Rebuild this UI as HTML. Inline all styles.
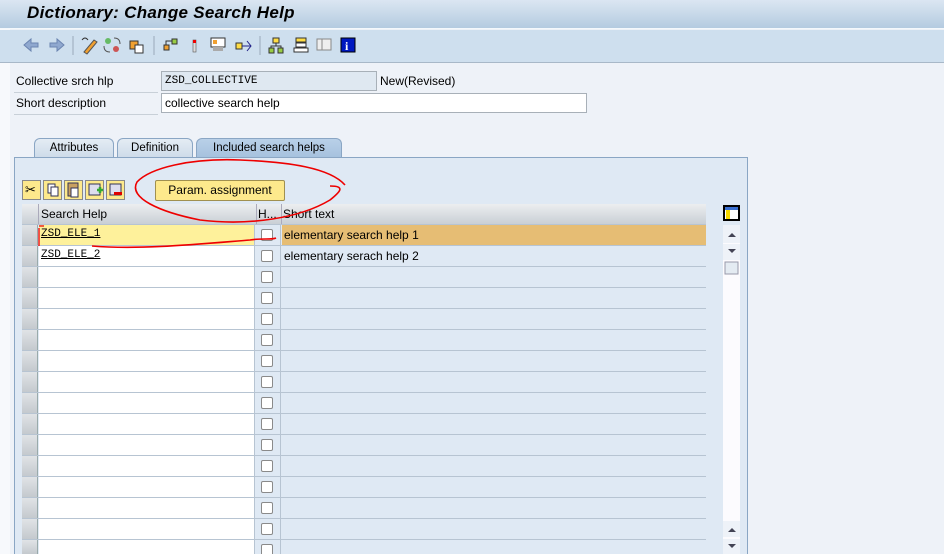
<!DOCTYPE html>
<html style="overflow:hidden;height:554px"><head><meta charset="utf-8"><style>
*{margin:0;padding:0;box-sizing:border-box}
html,body{width:944px;height:554px;overflow:hidden}
body{background:#eef2f8;font-family:"Liberation Sans",sans-serif;font-size:12px;color:#000;position:relative}
.abs{position:absolute}
#title{left:0;top:0;width:944px;height:29px;background:linear-gradient(#dbe6f2,#b4cbe0);border-bottom:1px solid #f4f8fc}
#title span{position:absolute;left:27px;top:3px;font-size:17px;font-weight:bold;font-style:italic;letter-spacing:.3px;color:#000}
#tb{left:0;top:30px;width:944px;height:33px;background:#cedfee;border-bottom:1px solid #a8b8c8}
.lbl{font-size:12px}
.inp{height:20px;border:1px solid #a8b0b8;background:#fff;padding-left:3px;line-height:18px}
.mono{font-family:"Liberation Mono",monospace;font-size:11px}
.tab{top:138px;height:20px;background:linear-gradient(#e4ecf4,#cddbe9);border:1px solid #8aa6c4;border-bottom:none;border-radius:6px 6px 0 0;line-height:19px;text-align:center;font-size:11.5px}
#frame{left:14px;top:157px;width:734px;height:400px;border:1px solid #8aa6c4;background:#dfe9f4}
.row{position:absolute;left:22px;width:684px;height:21px;border-bottom:1px solid #b7c4d2}
.sel{position:absolute;left:0;top:0;width:16px;height:20px;background:linear-gradient(#e0e3e6,#c4c9ce);border-right:1px solid #9aa}
.c1{position:absolute;left:17px;top:0;width:216px;height:20px;background:#fff;border-right:1px solid #b7c4d2}
.c2{position:absolute;left:234px;top:0;width:25px;height:20px;border-right:1px solid #b7c4d2}
.cb{position:absolute;left:5px;top:4px;width:12px;height:12px;border:1px solid #8a8a8a;background:#fff;border-radius:2px}
.c3{position:absolute;left:260px;top:0;width:424px;height:20px}
.ibtn{top:180px;width:19px;height:20px;background:#fde98c;border:1px solid #888}
</style></head><body>
<div class="abs" style="left:0;top:0;width:10px;height:554px;background:#f7f9fc"></div>
<div id="title" class="abs"><span>Dictionary: Change Search Help</span></div>
<div id="tb" class="abs">
<svg width="380" height="32" style="position:absolute;left:0;top:0">
<path d="M24 15 l7-6 v4 h7 v4 h-7 v4z" fill="#8fa8cf" stroke="#6b84b0"/>
<path d="M64 15 l-7-6 v4 h-7 v4 h7 v4z" fill="#8fa8cf" stroke="#6b84b0"/>
<line x1="73" y1="6" x2="73" y2="25" stroke="#9ab"/>
<path d="M84 22 l10-12 3 2-10 12z" fill="#f0a030" stroke="#555"/><path d="M82 10 q3-4 6 0" stroke="#333" fill="none"/>
<circle cx="108" cy="11" r="3" fill="#6b6"/><circle cx="116" cy="19" r="3" fill="#c55"/><path d="M104 16 q0 6 6 6 M120 14 q0-6-6-6" stroke="#555" fill="none"/>
<rect x="130" y="11" width="8" height="8" fill="#f0a030" stroke="#333"/><rect x="135" y="15" width="8" height="8" fill="#fff" stroke="#333"/>
<line x1="154" y1="6" x2="154" y2="25" stroke="#9ab"/>
<rect x="164" y="15" width="5" height="5" fill="#f0a030" stroke="#333"/><rect x="172" y="9" width="5" height="5" fill="#9c4" stroke="#333"/><path d="M166 15 v-4 h6" stroke="#333" fill="none"/>
<rect x="193" y="10" width="3" height="12" fill="#ddd" stroke="#555" stroke-width=".6"/><rect x="193" y="10" width="3" height="3" fill="#e00"/>
<rect x="211" y="8" width="14" height="9" fill="#fff" stroke="#333"/><rect x="213" y="10" width="4" height="4" fill="#f0a030"/><rect x="213" y="17" width="10" height="4" fill="#aaa"/>
<rect x="236" y="13" width="6" height="6" fill="#fd4" stroke="#333"/><path d="M242 16 h9 M247 11 l4 5-4 5" stroke="#228" fill="none"/>
<line x1="260" y1="6" x2="260" y2="25" stroke="#9ab"/>
<rect x="273" y="8" width="6" height="5" fill="#fd4" stroke="#333"/><rect x="269" y="18" width="5" height="5" fill="#9c4" stroke="#333"/><rect x="278" y="18" width="5" height="5" fill="#9c4" stroke="#333"/><path d="M276 13 v3 M271 18 v-2 h10 v2" stroke="#333" fill="none"/>
<rect x="296" y="8" width="10" height="4" fill="#fd4" stroke="#333"/><rect x="296" y="13" width="10" height="4" fill="#fff" stroke="#333"/><rect x="294" y="18" width="14" height="4" fill="#fff" stroke="#333"/>
<rect x="317" y="9" width="14" height="11" fill="#eee" stroke="#888"/><line x1="322" y1="9" x2="322" y2="20" stroke="#888"/>
<rect x="341" y="8" width="14" height="14" fill="#0018c0" stroke="#000"/><text x="345" y="20" fill="#fff" font-size="12" font-weight="bold" font-family="Liberation Serif">i</text>
</svg></div>
<div class="abs lbl" style="left:16px;top:74px">Collective srch hlp</div>
<div class="abs inp mono" style="left:161px;top:71px;width:216px;background:#dfe8f1">ZSD_COLLECTIVE</div>
<div class="abs lbl" style="left:380px;top:74px">New(Revised)</div>
<div class="abs" style="left:14px;top:92px;width:144px;border-top:1px solid #c8d0d8"></div>
<div class="abs lbl" style="left:16px;top:96px">Short description</div>
<div class="abs inp" style="left:161px;top:93px;width:426px">collective search help</div>
<div class="abs" style="left:14px;top:114px;width:144px;border-top:1px solid #c8d0d8"></div>
<div class="abs tab" style="left:34px;width:80px">Attributes</div>
<div class="abs tab" style="left:117px;width:76px">Definition</div>
<div class="abs tab" style="left:196px;width:146px;background:linear-gradient(#b9d0e8,#a4c0dd);height:21px">Included search helps</div>
<div id="frame" class="abs"></div>
<div class="abs ibtn" style="left:22px"></div><div class="abs ibtn" style="left:43px"></div><div class="abs ibtn" style="left:64px"></div><div class="abs ibtn" style="left:85px"></div><div class="abs ibtn" style="left:106px"></div>
<div class="abs" style="left:25px;top:182px;font-size:13px">✂</div>
<svg class="abs" style="left:43px;top:180px" width="84" height="20">
<rect x="5" y="4" width="7" height="9" fill="#fff" stroke="#335"/><rect x="8" y="7" width="7" height="9" fill="#fff" stroke="#335"/>
<rect x="25" y="3" width="10" height="13" fill="#c9a060" stroke="#335"/><rect x="28" y="8" width="7" height="9" fill="#fff" stroke="#335"/>
<rect x="46" y="4" width="11" height="11" fill="#dde" stroke="#335"/><path d="M54 10 h6 M57 7 v6" stroke="#3a3" stroke-width="2.5"/>
<rect x="67" y="4" width="11" height="11" fill="#dde" stroke="#335"/><rect x="71" y="12" width="8" height="3" fill="#d00"/>
</svg>
<div class="abs" style="left:155px;top:180px;width:130px;height:21px;background:#fde98c;border:1px solid #a09050;border-radius:2px;text-align:center;line-height:19px">Param. assignment</div>
<div class="row" style="top:204px;height:21px;background:linear-gradient(#eceef0,#c9cfd5)">
<div style="position:absolute;left:16px;top:0;height:20px;border-left:1px solid #aab"></div>
<div style="position:absolute;left:19px;top:3px">Search Help</div>
<div style="position:absolute;left:234px;top:0;height:20px;border-left:1px solid #aab"></div>
<div style="position:absolute;left:236px;top:3px">H...</div>
<div style="position:absolute;left:259px;top:0;height:20px;border-left:1px solid #aab"></div>
<div style="position:absolute;left:261px;top:3px">Short text</div></div>
<div class="row" style="top:225px"><div class="sel"></div><div class="c1 mono" style="background:#fef19b;padding:3px 0 0 2px;text-decoration:underline">ZSD_ELE_1</div><div class="c2"><div class="cb"></div></div><div class="c3" style="background:#e6bd74;padding:3px 0 0 2px">elementary search help 1</div></div>
<div class="row" style="top:246px"><div class="sel"></div><div class="c1 mono" style="padding:3px 0 0 2px;text-decoration:underline">ZSD_ELE_2</div><div class="c2"><div class="cb"></div></div><div class="c3" style="padding:3px 0 0 2px">elementary serach help 2</div></div>
<div class="row" style="top:267px"><div class="sel"></div><div class="c1"></div><div class="c2"><div class="cb"></div></div></div>
<div class="row" style="top:288px"><div class="sel"></div><div class="c1"></div><div class="c2"><div class="cb"></div></div></div>
<div class="row" style="top:309px"><div class="sel"></div><div class="c1"></div><div class="c2"><div class="cb"></div></div></div>
<div class="row" style="top:330px"><div class="sel"></div><div class="c1"></div><div class="c2"><div class="cb"></div></div></div>
<div class="row" style="top:351px"><div class="sel"></div><div class="c1"></div><div class="c2"><div class="cb"></div></div></div>
<div class="row" style="top:372px"><div class="sel"></div><div class="c1"></div><div class="c2"><div class="cb"></div></div></div>
<div class="row" style="top:393px"><div class="sel"></div><div class="c1"></div><div class="c2"><div class="cb"></div></div></div>
<div class="row" style="top:414px"><div class="sel"></div><div class="c1"></div><div class="c2"><div class="cb"></div></div></div>
<div class="row" style="top:435px"><div class="sel"></div><div class="c1"></div><div class="c2"><div class="cb"></div></div></div>
<div class="row" style="top:456px"><div class="sel"></div><div class="c1"></div><div class="c2"><div class="cb"></div></div></div>
<div class="row" style="top:477px"><div class="sel"></div><div class="c1"></div><div class="c2"><div class="cb"></div></div></div>
<div class="row" style="top:498px"><div class="sel"></div><div class="c1"></div><div class="c2"><div class="cb"></div></div></div>
<div class="row" style="top:519px"><div class="sel"></div><div class="c1"></div><div class="c2"><div class="cb"></div></div></div>
<div class="row" style="top:540px;height:14px;border-bottom:none"><div class="sel" style="height:14px"></div><div class="c1" style="height:14px"></div><div class="c2" style="height:14px"><div class="cb"></div></div></div>
<div class="abs" style="left:723px;top:225px;width:17px;height:329px;background:#fcfbfe"></div>
<div class="abs" style="left:723px;top:205px;width:17px;height:16px;background:#fff;border:2px solid #000"><div style="position:absolute;left:1px;top:3px;width:4px;height:9px;background:#f5d800"></div><div style="position:absolute;left:0;top:0;width:13px;height:3px;background:#3a6fd0"></div></div>
<svg class="abs" style="left:722px;top:225px" width="20" height="329"><rect x="1" y="0" width="17" height="18" fill="#eef2f8"/><path d="M6 12 l4-4 4 4z" fill="#445"/><rect x="1" y="19" width="17" height="16" fill="#eef2f8"/><path d="M6 24 l4 4 4-4z" fill="#445"/><rect x="3" y="37" width="13" height="12" fill="#e4ebf2" stroke="#99a"/><rect x="1" y="296" width="17" height="16" fill="#eef2f8"/><path d="M6 307 l4-4 4 4z" fill="#445"/><rect x="1" y="314" width="17" height="15" fill="#eef2f8"/><path d="M6 319 l4 4 4-4z" fill="#445"/></svg>
<svg class="abs" style="left:0;top:0" width="944" height="554">
<path d="M345 185 C330 168 290 162 240 160 C190 158 150 168 137 182 C128 198 160 212 200 220 C250 226 300 218 330 200 C340 192 346 186 330 186" stroke="#e00" stroke-width="1.6" fill="none"/>
<path d="M39 228 V246 M39 226 H44" stroke="#e00" stroke-width="1.3" fill="none"/>
<path d="M92 246 C140 250 200 244 250 240 C262 238 272 240 276 238" stroke="#e00" stroke-width="1.6" fill="none"/>
</svg>
</body></html>
